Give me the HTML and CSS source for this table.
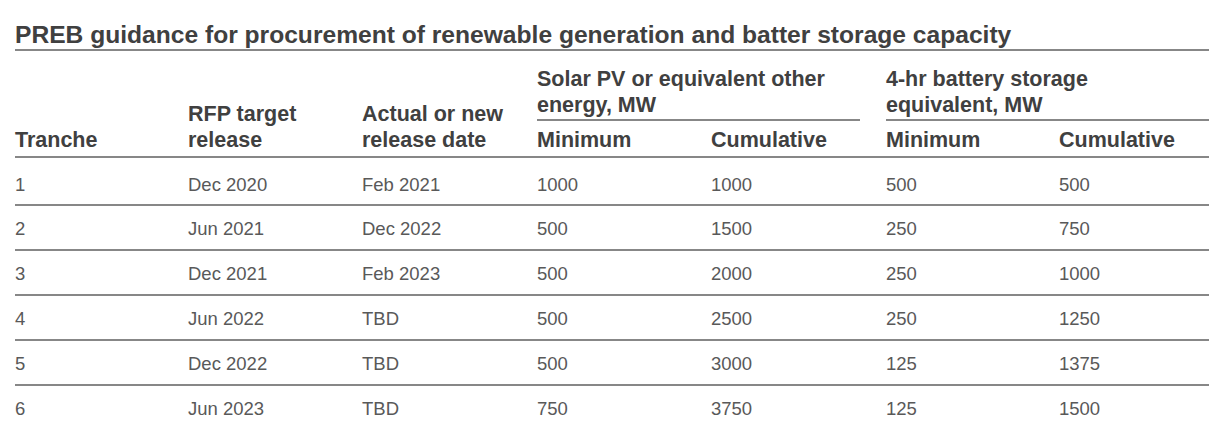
FILE: index.html
```html
<!DOCTYPE html>
<html lang="en">
<head>
<meta charset="utf-8">
<title>PREB guidance</title>
<link rel="stylesheet" href="styles.css">
</head>
<body>
<main class="panel">
  <h1 class="title">PREB guidance for procurement of renewable generation and batter storage capacity</h1>
  <table class="data">
    <colgroup>
      <col class="c1"><col class="c2"><col class="c3"><col class="c4"><col class="c5"><col class="c6"><col class="c7">
    </colgroup>
    <thead>
      <tr class="group-row">
        <th rowspan="2" class="hcell">Tranche</th>
        <th rowspan="2" class="hcell">RFP target<br>release</th>
        <th rowspan="2" class="hcell">Actual or new<br>release date</th>
        <th colspan="2" class="gcell"><div class="group group-first">Solar PV or equivalent other<br>energy, MW</div></th>
        <th colspan="2" class="gcell"><div class="group">4-hr battery storage<br>equivalent, MW</div></th>
      </tr>
      <tr class="sub-row">
        <th class="scell">Minimum</th>
        <th class="scell">Cumulative</th>
        <th class="scell">Minimum</th>
        <th class="scell">Cumulative</th>
      </tr>
    </thead>
    <tbody>
      <tr><td>1</td><td>Dec 2020</td><td>Feb 2021</td><td>1000</td><td>1000</td><td>500</td><td>500</td></tr>
      <tr><td>2</td><td>Jun 2021</td><td>Dec 2022</td><td>500</td><td>1500</td><td>250</td><td>750</td></tr>
      <tr><td>3</td><td>Dec 2021</td><td>Feb 2023</td><td>500</td><td>2000</td><td>250</td><td>1000</td></tr>
      <tr><td>4</td><td>Jun 2022</td><td>TBD</td><td>500</td><td>2500</td><td>250</td><td>1250</td></tr>
      <tr><td>5</td><td>Dec 2022</td><td>TBD</td><td>500</td><td>3000</td><td>125</td><td>1375</td></tr>
      <tr><td>6</td><td>Jun 2023</td><td>TBD</td><td>750</td><td>3750</td><td>125</td><td>1500</td></tr>
    </tbody>
  </table>
</main>
</body>
</html>
```
FILE: styles.css
```css
html, body {
  margin: 0;
  padding: 0;
  background: #ffffff;
}

body {
  font-family: "Liberation Sans", Arial, sans-serif;
  color: #595959;
}

.panel {
  width: 1194px;
  margin-left: 15px;
}

.title {
  margin: 0;
  padding-top: 21px;
  font-size: 24.6px;
  line-height: 28px;
  font-weight: bold;
  color: #404040;
  border-bottom: 2px solid #878787;
  white-space: nowrap;
}

.data {
  width: 1194px;
  table-layout: fixed;
  border-collapse: collapse;
  border-spacing: 0;
}

.c1 { width: 173px; }
.c2 { width: 174px; }
.c3 { width: 175px; }
.c4 { width: 174px; }
.c5 { width: 175px; }
.c6 { width: 173px; }
.c7 { width: 150px; }

.data th {
  padding: 0;
  text-align: left;
  font-size: 21.5px;
  line-height: 26px;
  font-weight: bold;
  color: #404040;
  vertical-align: bottom;
}

.hcell {
  padding-bottom: 3px !important;
  border-bottom: 2px solid #878787;
}

.gcell {
  padding-top: 15px !important;
}

.group {
  padding-bottom: 1px;
  border-bottom: 2px solid #878787;
}

.group-first {
  margin-right: 26px;
}

.scell {
  padding-top: 6px !important;
  padding-bottom: 3px !important;
  border-bottom: 2px solid #878787;
}

.data td {
  padding: 12px 0 9px 0;
  font-size: 18.5px;
  line-height: 22px;
  color: #595959;
  border-bottom: 2px solid #878787;
  white-space: nowrap;
}

.data tbody tr:first-child td {
  padding-top: 16px;
  padding-bottom: 8px;
}

.data tbody tr:last-child td {
  border-bottom: none;
}
```
